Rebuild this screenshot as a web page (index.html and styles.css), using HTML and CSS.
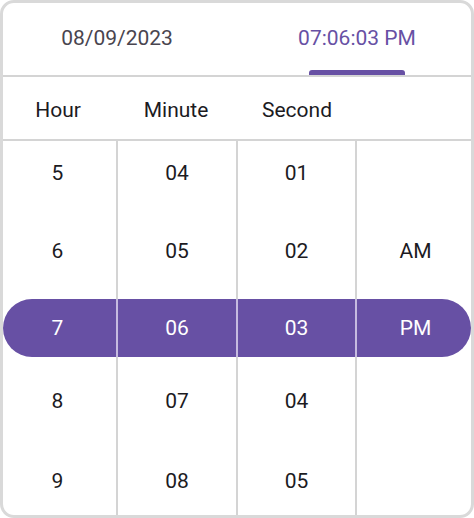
FILE: index.html
```html
<!DOCTYPE html>
<html lang="en">
  <head>
    <meta charset="UTF-8" />
    <meta name="viewport" content="width=device-width, initial-scale=1.0" />
    <title>Time Picker</title>
    <link rel="stylesheet" href="styles.css">
  </head>
  <body>
    <div class="picker">
      <div class="tabs">
        <div class="tab">08/09/2023</div>
        <div class="tab active">07:06:03 PM</div>
      </div>
      <div class="labels">
        <span>Hour</span>
        <span>Minute</span>
        <span>Second</span>
        <span></span>
      </div>
      <div class="wheel">
        <div class="cell">5</div>
        <div class="cell">04</div>
        <div class="cell">01</div>
        <div class="cell"></div>

        <div class="cell">6</div>
        <div class="cell">05</div>
        <div class="cell">02</div>
        <div class="cell">AM</div>

        <div class="cell selected first">7</div>
        <div class="cell selected">06</div>
        <div class="cell selected">03</div>
        <div class="cell selected last">PM</div>

        <div class="cell">8</div>
        <div class="cell">07</div>
        <div class="cell">04</div>
        <div class="cell"></div>

        <div class="cell">9</div>
        <div class="cell">08</div>
        <div class="cell">05</div>
        <div class="cell"></div>
      </div>
    </div>
  </body>
</html>
```

FILE: styles.css
```css
body {
  margin: 0;
  padding: 0;
  background-color: #ffffff;
  font-family: Roboto, 'Noto Sans', sans-serif;
  color: #1c1b1f;
}
.picker {
  box-sizing: border-box;
  width: 474px;
  height: 518px;
  border: 3px solid #d9d9d9;
  border-radius: 14px;
  background-color: #fff;
  display: flex;
  flex-direction: column;
  overflow: hidden;
}
.tabs {
  display: flex;
  height: 72px;
  border-bottom: 2px solid #d4d4d4;
}
.tab {
  flex: 1;
  display: flex;
  justify-content: center;
  align-items: center;
  position: relative;
  font-size: 21px;
  color: #49454f;
  padding-bottom: 2px;
  padding-right: 6px;
}
.tab.active {
  color: #6750a4;
  padding-right: 0;
  padding-left: 6px;
}
.tab.active::after {
  content: "";
  position: absolute;
  bottom: 0;
  left: 50%;
  width: 96px;
  margin-left: -45px;
  height: 5px;
  border-radius: 3px 3px 0 0;
  background-color: #6750a4;
}
.labels,
.wheel {
  display: grid;
  grid-template-columns: 113px 120px 119px 1fr;
}
.labels {
  height: 62px;
  border-bottom: 2px solid #d4d4d4;
  align-items: center;
  font-size: 21px;
}
.labels span {
  text-align: center;
  padding-top: 4px;
}
.labels span:first-child {
  padding-right: 3px;
}
.labels span:nth-child(3) {
  padding-left: 3px;
}
.wheel {
  flex: 1;
  grid-template-rows: 64px 94px 58px 88px 1fr;
}
.cell {
  display: flex;
  justify-content: center;
  align-items: center;
  font-size: 21px;
}
.cell:not(:nth-child(4n + 1)) {
  border-left: 2px solid #d4d4d4;
}
.cell:nth-child(4n + 1) {
  padding-right: 4px;
}
.cell:nth-child(4n) {
  padding-left: 3px;
}
.wheel .cell:nth-child(n + 5):nth-child(-n + 8) {
  padding-bottom: 2px;
}
.wheel .cell:nth-child(n + 17) {
  padding-top: 2px;
}
.cell.selected {
  background-color: #6750a4;
  color: #fff;
  border-left-color: #c6bbe0;
}
.cell.first {
  border-radius: 29px 0 0 29px;
}
.cell.last {
  border-radius: 0 29px 29px 0;
}
```
